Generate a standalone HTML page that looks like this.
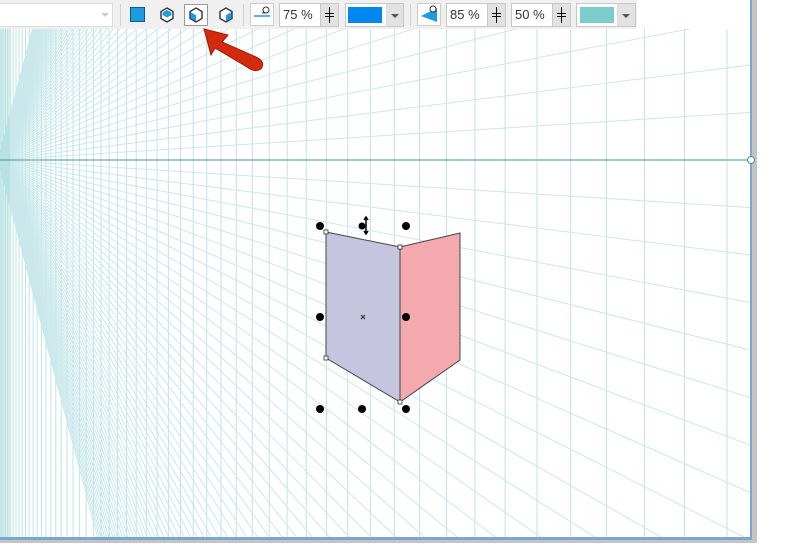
<!DOCTYPE html>
<html><head><meta charset="utf-8"><style>
html,body{margin:0;width:802px;height:560px;overflow:hidden;background:#fff;font-family:"Liberation Sans",sans-serif;position:relative}
.tb{position:absolute;left:0;top:0;width:637px;height:29px;background:#f0f0f0}
.box{position:absolute;background:#fff;border:1px solid #c8c8c8;box-sizing:border-box}
.sp{position:absolute;background:#e2e2e2;border:1px solid #c8c8c8;box-sizing:border-box}
.txt{position:absolute;font-size:13px;color:#333;top:7px}
.sep{position:absolute;top:4px;width:1px;height:22px;background:#d0d0d0}
</style></head><body>
<svg width="802" height="560" style="position:absolute;left:0;top:0"><defs><clipPath id="cp"><rect x="0" y="29" width="750" height="508"/></clipPath></defs><g id="g" clip-path="url(#cp)"></g><g id="f"></g></svg>
<div class="tb">
 <div class="box" style="left:-2px;top:3px;width:115px;height:24px;border-color:#ddd"></div>
 <div style="position:absolute;left:101px;top:13px;border-left:4px solid transparent;border-right:4px solid transparent;border-top:4px solid #ccc"></div>
 <div class="sep" style="left:120px"></div>
 <div style="position:absolute;left:130px;top:7px;width:15px;height:15px;background:#1c9be0;border:1px solid #0e5a8a;box-sizing:border-box"></div>
 <svg style="position:absolute;left:158px;top:6px" width="18" height="18"><polygon points="9,2 15,5.5 15,12.5 9,16 3,12.5 3,5.5" fill="#fff" stroke="#333" stroke-width="1.4"/><polygon points="9,4 13.5,6.5 9,9 4.5,6.5" fill="#1c9be0"/><polygon points="4.5,6.5 9,9 13.5,6.5 13.5,9 9,11.5 4.5,9" fill="#1c9be0"/></svg>
 <div class="box" style="left:184px;top:4px;width:24px;height:22px;border-color:#999"></div>
 <svg style="position:absolute;left:187px;top:6px" width="18" height="18"><polygon points="9,2 15,5.5 15,12.5 9,16 3,12.5 3,5.5" fill="#fff" stroke="#333" stroke-width="1.4"/><polygon points="3.5,6 9,9.2 9,15.3 3.5,12.2" fill="#1c9be0"/></svg>
 <svg style="position:absolute;left:217px;top:6px" width="18" height="18"><polygon points="9,2 15,5.5 15,12.5 9,16 3,12.5 3,5.5" fill="#fff" stroke="#333" stroke-width="1.4"/><polygon points="14.5,6 9,9.2 9,15.3 14.5,12.2" fill="#1c9be0"/></svg>
 <div class="sep" style="left:243px"></div>
 <div class="box" style="left:250px;top:3px;width:24px;height:23px;border-color:#ccc"></div>
 <svg style="position:absolute;left:252px;top:5px" width="20" height="18"><line x1="2" y1="11" x2="18" y2="11" stroke="#1c9be0" stroke-width="1.5"/><circle cx="14" cy="5" r="3" fill="none" stroke="#333"/><line x1="10" y1="8" x2="13" y2="8" stroke="#333"/></svg>
 <div class="box" style="left:279px;top:3px;width:42px;height:24px"></div><div class="txt" style="left:283px">75 %</div>
 <div class="sp" style="left:320px;top:3px;width:19px;height:24px"></div>
 <div style="position:absolute;left:329px;top:7px;width:1px;height:16px;background:#000"></div><div style="position:absolute;left:325px;top:13px;width:9px;height:1px;background:#000"></div><div style="position:absolute;left:325px;top:16px;width:9px;height:1px;background:#000"></div>
 <div class="box" style="left:345px;top:3px;width:59px;height:24px"></div>
 <div style="position:absolute;left:348px;top:7px;width:34px;height:16px;background:#0088f0"></div>
 <div class="sp" style="left:386px;top:3px;width:18px;height:24px;border-left:1px solid #ddd"></div>
 <div style="position:absolute;left:391px;top:14px;border-left:4px solid transparent;border-right:4px solid transparent;border-top:4px solid #555"></div>
 <div class="sep" style="left:410px"></div>
 <div class="box" style="left:417px;top:3px;width:24px;height:23px;border-color:#ccc"></div>
 <svg style="position:absolute;left:419px;top:5px" width="20" height="18"><polygon points="2,11 18,3 18,17" fill="#1c9be0"/><circle cx="14" cy="4" r="3" fill="#fff" stroke="#333"/></svg>
 <div class="box" style="left:446px;top:3px;width:42px;height:24px"></div><div class="txt" style="left:450px">85 %</div>
 <div class="sp" style="left:487px;top:3px;width:19px;height:24px"></div>
 <div style="position:absolute;left:496px;top:7px;width:1px;height:16px;background:#000"></div><div style="position:absolute;left:492px;top:13px;width:9px;height:1px;background:#000"></div><div style="position:absolute;left:492px;top:16px;width:9px;height:1px;background:#000"></div>
 <div class="box" style="left:511px;top:3px;width:42px;height:24px"></div><div class="txt" style="left:515px">50 %</div>
 <div class="sp" style="left:552px;top:3px;width:19px;height:24px"></div>
 <div style="position:absolute;left:561px;top:7px;width:1px;height:16px;background:#000"></div><div style="position:absolute;left:557px;top:13px;width:9px;height:1px;background:#000"></div><div style="position:absolute;left:557px;top:16px;width:9px;height:1px;background:#000"></div>
 <div class="box" style="left:576px;top:3px;width:60px;height:24px"></div>
 <div style="position:absolute;left:580px;top:7px;width:34px;height:16px;background:#7ccccc"></div>
 <div class="sp" style="left:617px;top:3px;width:19px;height:24px;border-left:1px solid #ddd"></div>
 <div style="position:absolute;left:622px;top:14px;border-left:4px solid transparent;border-right:4px solid transparent;border-top:4px solid #555"></div>
</div>
<svg width="802" height="560" style="position:absolute;left:0;top:0">
 <polygon points="326,232 400,247 400,402 326,358" fill="#c5c5e0" stroke="#444" stroke-width="1"/>
 <polygon points="400,247 460,233 460,360 400,402" fill="#f4a9ae" stroke="#444" stroke-width="1"/>
 <g fill="#fff" stroke="#333" stroke-width="0.8"><rect x="324" y="230" width="4" height="4"/><rect x="398" y="245" width="4" height="4"/><rect x="324" y="356" width="4" height="4"/><rect x="398" y="400" width="4" height="4"/></g>
 <g fill="#000"><circle cx="320" cy="226" r="4"/><circle cx="362" cy="226" r="3.5"/><circle cx="406" cy="226" r="4"/><circle cx="320" cy="317" r="4"/><circle cx="406" cy="317" r="4"/><circle cx="320" cy="409" r="4"/><circle cx="362" cy="409" r="4"/><circle cx="406" cy="409" r="4"/></g>
 <path d="M366,218 V233 M364,220 L366,217 L368,220 M364,231 L366,234 L368,231" stroke="#000" stroke-width="1.5" fill="none"/>
 <path d="M361,315 l4,4 M365,315 l-4,4" stroke="#333" stroke-width="1.2"/>
 <path d="M204,29 L228,35 L222,42 L256,57 Q266,62 261,69 Q255,73 247,67 L215,48 L211,55 Z" fill="#d42a10" stroke="#a01800" stroke-width="1"/>
</svg>
<script>
var s='',vx=-2,vy=160,c='#bfe3e6';
var x=727;while(x>0){s+='<line x1="'+x.toFixed(1)+'" y1="29" x2="'+x.toFixed(1)+'" y2="537" stroke="'+c+'" stroke-width="1"/>';x=(x-2.1)/1.059;}
for(var k=-60;k<=60;k++){if(k==0)continue;var y2=vy+k*47.5;
s+='<line x1="'+vx+'" y1="'+vy+'" x2="750" y2="'+y2.toFixed(1)+'" stroke="#cae8eb" stroke-width="1"/>';}
s+='<rect x="0" y="29" width="10" height="508" fill="#8fd0d0" opacity="0.3"/>';
document.getElementById('g').innerHTML=s;
var f='<line x1="0" y1="160" x2="750" y2="160" stroke="#4a8db5" stroke-width="1"/>';
f+='<rect x="0" y="537" width="752" height="3" fill="#7aa6d0"/><rect x="750" y="0" width="2" height="540" fill="#7aa6d0"/>';
f+='<rect x="752" y="0" width="5" height="543" fill="#c4c4c4"/><rect x="0" y="540" width="757" height="3" fill="#c4c4c4"/>';
f+='<circle cx="751" cy="160" r="3.5" fill="#fff" stroke="#4a8db5"/>';
document.getElementById('f').innerHTML=f;
</script>
</body></html>
